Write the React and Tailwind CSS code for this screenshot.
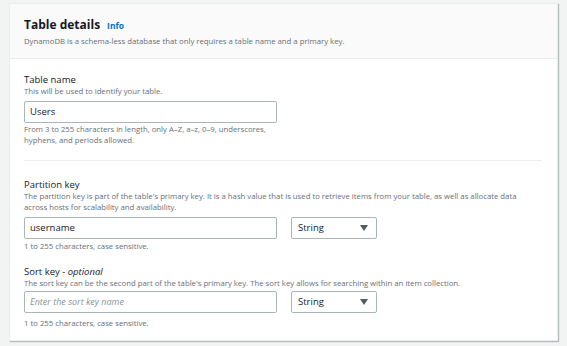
import React from 'react';

const font = { fontFamily: '"Open Sans", "Noto Sans", sans-serif' };

const Label = ({ children }) => (
    <div className="text-[9.5px] leading-[13px] text-[#16191f]">{children}</div>
);

const Desc = ({ children, className = '' }) => (
    <div className={`text-[7.75px] leading-[11px] text-[#687078] ${className}`}>{children}</div>
);

const TextInput = ({ value, placeholder }) => (
    <div className="w-[253px] h-[22px] border border-[#aab7b8] rounded-[2px] bg-white flex items-center px-[5px]">
        {value ? (
            <span className="text-[9.5px] text-[#16191f]">{value}</span>
        ) : (
            <span className="text-[9px] italic text-[#879596]">{placeholder}</span>
        )}
    </div>
);

const SelectBox = () => (
    <div className="w-[86px] h-[22px] border border-[#aab7b8] rounded-[2px] bg-white flex items-center justify-between pl-[6px] pr-[8px]">
        <span className="text-[9.5px] text-[#16191f]">String</span>
        <svg width="8" height="6" viewBox="0 0 8 6">
            <path d="M0 0 L8 0 L4 6 Z" fill="#545b64" />
        </svg>
    </div>
);

const App = () => {
    return (
        <div className="min-h-screen bg-[#f2f3f3] pt-[3px] px-[9px]" style={font}>
            <div className="w-[549px] bg-white border border-[#eaeded] shadow-[1px_1px_1px_rgba(0,28,36,0.25)]">
                {/* Header */}
                <div className="bg-[#fafafa] border-b border-[#eaeded] px-[14px] pt-[13px] pb-[11px]">
                    <div className="flex items-baseline gap-[7px]">
                        <h2 className="text-[12px] leading-[16px] font-bold text-[#16191f]">Table details</h2>
                        <span className="text-[8.5px] font-bold text-[#0073bb]">Info</span>
                    </div>
                    <Desc className="mt-[3px]">
                        DynamoDB is a schema-less database that only requires a table name and a primary key.
                    </Desc>
                </div>

                {/* Body */}
                <div className="px-[14px] pt-[14px] pb-[11px]">
                    <Label>Table name</Label>
                    <Desc>This will be used to identify your table.</Desc>
                    <div className="mt-[4px]">
                        <TextInput value="Users" />
                    </div>
                    <Desc className="mt-[1px]">
                        From 3 to 255 characters in length, only A–Z, a–z, 0–9, underscores,
                        <br />
                        hyphens, and periods allowed.
                    </Desc>

                    <div className="border-t border-[#eaeded] mt-[14px] mr-px"></div>

                    <div className="mt-[17px]">
                        <Label>Partition key</Label>
                        <Desc>
                            The partition key is part of the table's primary key. It is a hash value that is used to retrieve items from your table, as well as allocate data
                            <br />
                            across hosts for scalability and availability.
                        </Desc>
                        <div className="flex gap-[14px] mt-[4px]">
                            <TextInput value="username" />
                            <SelectBox />
                        </div>
                        <Desc className="mt-[2px]">1 to 255 characters, case sensitive.</Desc>
                    </div>

                    <div className="mt-[13px]">
                        <Label>
                            Sort key - <span className="italic">optional</span>
                        </Label>
                        <Desc>
                            The sort key can be the second part of the table's primary key. The sort key allows for searching within an item collection.
                        </Desc>
                        <div className="flex gap-[14px] mt-[2px]">
                            <TextInput placeholder="Enter the sort key name" />
                            <SelectBox />
                        </div>
                        <Desc className="mt-[5px]">1 to 255 characters, case sensitive.</Desc>
                    </div>
                </div>
            </div>
        </div>
    );
};

export default App;
